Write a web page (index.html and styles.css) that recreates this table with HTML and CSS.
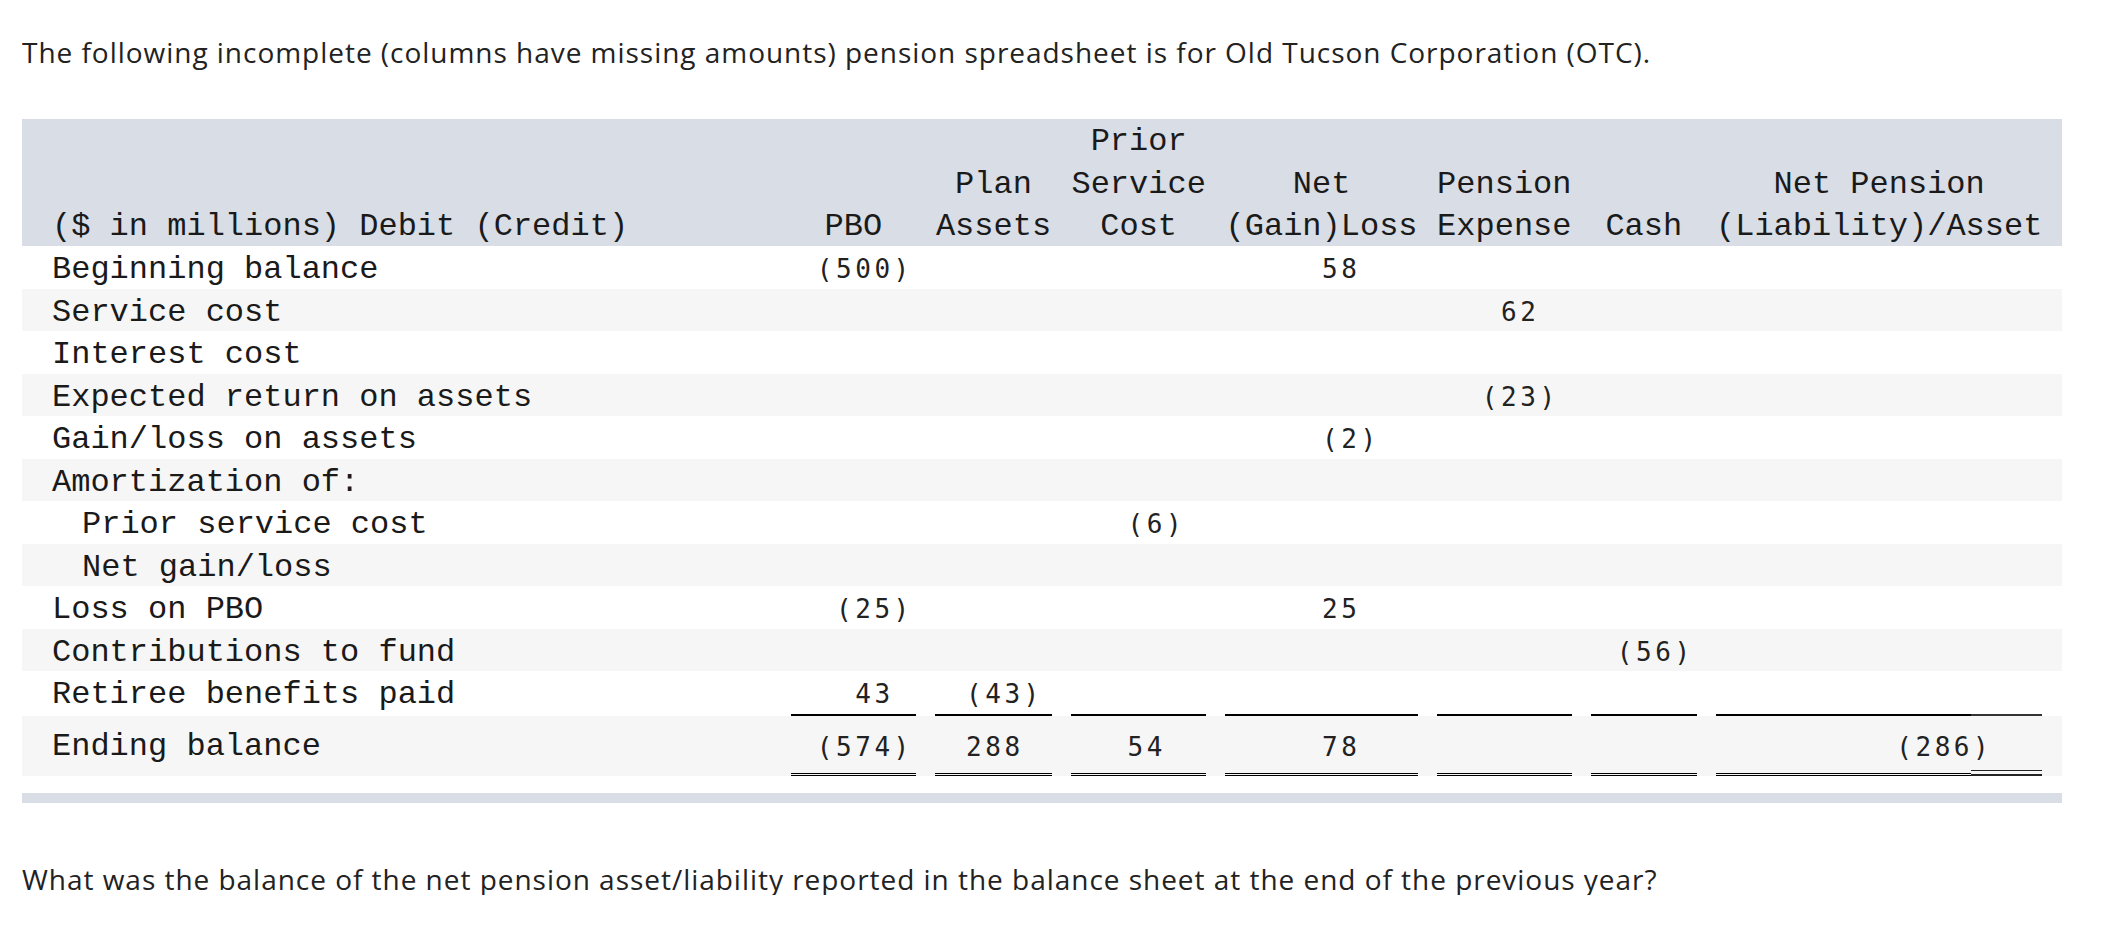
FILE: index.html
```html
<!DOCTYPE html>
<html lang="en">
<head>
<meta charset="utf-8">
<title>Pension spreadsheet</title>
<link rel="stylesheet" href="styles.css">
</head>
<body>
<div class="page">
  <p class="lead">The following incomplete (columns have missing amounts) pension spreadsheet is for Old Tucson Corporation (OTC).</p>
  <table class="sheet">
    <colgroup>
      <col class="w-label"><col class="w-pbo"><col class="w-plan"><col class="w-psc"><col class="w-net"><col class="w-pen"><col class="w-cash"><col class="w-np">
    </colgroup>
    <thead>
      <tr class="head">
        <th class="lbl"><div class="hcell">($ in millions) Debit (Credit)</div></th>
        <th class="hd"><div class="hcell">PBO</div></th>
        <th class="hd"><div class="hcell">Plan<br>Assets</div></th>
        <th class="hd"><div class="hcell">Prior<br>Service<br>Cost</div></th>
        <th class="hd"><div class="hcell">Net<br>(Gain)Loss</div></th>
        <th class="hd"><div class="hcell">Pension<br>Expense</div></th>
        <th class="hd"><div class="hcell">Cash</div></th>
        <th class="hd hd-last"><div class="hcell">Net Pension<br>(Liability)/Asset</div></th>
      </tr>
    </thead>
    <tbody>
      <tr>
        <td class="lbl">Beginning balance</td>
        <td class="num c-pbo">(500)</td><td class="num c-plan"></td><td class="num c-psc"></td><td class="num c-net">58&nbsp;</td><td class="num c-pen"></td><td class="num c-cash"></td><td class="num c-np"></td>
      </tr>
      <tr class="alt">
        <td class="lbl">Service cost</td>
        <td class="num c-pbo"></td><td class="num c-plan"></td><td class="num c-psc"></td><td class="num c-net"></td><td class="num c-pen">62&nbsp;</td><td class="num c-cash"></td><td class="num c-np"></td>
      </tr>
      <tr>
        <td class="lbl">Interest cost</td>
        <td class="num c-pbo"></td><td class="num c-plan"></td><td class="num c-psc"></td><td class="num c-net"></td><td class="num c-pen"></td><td class="num c-cash"></td><td class="num c-np"></td>
      </tr>
      <tr class="alt">
        <td class="lbl">Expected return on assets</td>
        <td class="num c-pbo"></td><td class="num c-plan"></td><td class="num c-psc"></td><td class="num c-net"></td><td class="num c-pen">(23)</td><td class="num c-cash"></td><td class="num c-np"></td>
      </tr>
      <tr>
        <td class="lbl">Gain/loss on assets</td>
        <td class="num c-pbo"></td><td class="num c-plan"></td><td class="num c-psc"></td><td class="num c-net">(2)</td><td class="num c-pen"></td><td class="num c-cash"></td><td class="num c-np"></td>
      </tr>
      <tr class="alt">
        <td class="lbl">Amortization of:</td>
        <td class="num c-pbo"></td><td class="num c-plan"></td><td class="num c-psc"></td><td class="num c-net"></td><td class="num c-pen"></td><td class="num c-cash"></td><td class="num c-np"></td>
      </tr>
      <tr>
        <td class="lbl ind">Prior service cost</td>
        <td class="num c-pbo"></td><td class="num c-plan"></td><td class="num c-psc">(6)</td><td class="num c-net"></td><td class="num c-pen"></td><td class="num c-cash"></td><td class="num c-np"></td>
      </tr>
      <tr class="alt">
        <td class="lbl ind">Net gain/loss</td>
        <td class="num c-pbo"></td><td class="num c-plan"></td><td class="num c-psc"></td><td class="num c-net"></td><td class="num c-pen"></td><td class="num c-cash"></td><td class="num c-np"></td>
      </tr>
      <tr>
        <td class="lbl">Loss on PBO</td>
        <td class="num c-pbo">(25)</td><td class="num c-plan"></td><td class="num c-psc"></td><td class="num c-net">25&nbsp;</td><td class="num c-pen"></td><td class="num c-cash"></td><td class="num c-np"></td>
      </tr>
      <tr class="alt">
        <td class="lbl">Contributions to fund</td>
        <td class="num c-pbo"></td><td class="num c-plan"></td><td class="num c-psc"></td><td class="num c-net"></td><td class="num c-pen"></td><td class="num c-cash">(56)</td><td class="num c-np"></td>
      </tr>
      <tr class="sub">
        <td class="lbl">Retiree benefits paid</td>
        <td class="num c-pbo"><div class="ul">43&nbsp;</div></td>
        <td class="num c-plan"><div class="ul">(43)</div></td>
        <td class="num c-psc"><div class="ul">&nbsp;</div></td>
        <td class="num c-net"><div class="ul">&nbsp;</div></td>
        <td class="num c-pen"><div class="ul">&nbsp;</div></td>
        <td class="num c-cash"><div class="ul">&nbsp;</div></td>
        <td class="num c-np"><div class="ul">&nbsp;</div></td>
      </tr>
      <tr class="alt total">
        <td class="lbl">Ending balance</td>
        <td class="num c-pbo"><div class="dul">(574)</div></td>
        <td class="num c-plan"><div class="dul">288&nbsp;</div></td>
        <td class="num c-psc"><div class="dul">54&nbsp;</div></td>
        <td class="num c-net"><div class="dul">78&nbsp;</div></td>
        <td class="num c-pen"><div class="dul">&nbsp;</div></td>
        <td class="num c-cash"><div class="dul">&nbsp;</div></td>
        <td class="num c-np"><div class="dul">(286)</div></td>
      </tr>
    </tbody>
  </table>
  <div class="foot-bar"></div>
  <p class="question">What was the balance of the net pension asset/liability reported in the balance sheet at the end of the previous year?</p>
</div>
</body>
</html>
```

FILE: styles.css
```css
html, body {
  margin: 0;
  padding: 0;
  background: #ffffff;
}

.page {
  width: 2040px;
  padding: 0 40px 0 22px;
  color: #222222;
}

.lead,
.question {
  font-family: "Open Sans", Lato, "Liberation Sans", sans-serif;
  font-size: 28px;
  line-height: 32px;
  letter-spacing: 0.97px;
  margin: 0;
  color: #222222;
  white-space: nowrap;
}

.lead {
  padding-top: 35.5px;
}

.question {
  margin-top: 60px;
}

.sheet {
  margin-top: 51px;
  width: 2040px;
  table-layout: fixed;
  border-collapse: collapse;
  font-family: "Liberation Mono", "Courier New", monospace;
  font-size: 32px;
  line-height: 42.5px;
  color: #1a1a1a;
}

.w-label { width: 759.3px; }
.w-pbo { width: 144.2px; }
.w-plan { width: 136px; }
.w-psc { width: 154.3px; }
.w-net { width: 211.5px; }
.w-pen { width: 154px; }
.w-cash { width: 125px; }
.w-np { width: 356px; }

.sheet th,
.sheet td {
  white-space: nowrap;
}

/* header */
.head {
  background: #d8dde6;
}

.head th {
  padding: 0 9.7px;
  vertical-align: bottom;
  font-weight: normal;
  line-height: 42.5px;
}

.hcell {
  margin-top: 2.5px;
  margin-bottom: -2.5px;
}

.head .lbl {
  text-align: left;
  padding-left: 30px;
}

.hd {
  text-align: center;
}

.head .hd-last {
  padding-right: 20px;
}

/* body */
.sheet td {
  height: 42.5px;
  box-sizing: border-box;
  padding: 5px 9.7px 0;
  line-height: 37.5px;
  vertical-align: baseline;
}

.alt {
  background: #f6f6f6;
}

.sheet td.lbl {
  padding-left: 30px;
}

.sheet td.ind {
  padding-left: 60px;
}

.c-pbo { --off: 3px; }
.c-plan { --off: 9px; }
.c-psc { --off: 21px; }
.c-net { --off: 38px; }
.c-pen { --off: 13px; }
.c-cash { --off: 3px; }
.c-np { --off: 50px; }

.sheet td.num {
  text-align: right;
  font-family: "DejaVu Sans Mono", monospace;
  font-size: 26px;
  line-height: 30px;
  letter-spacing: 3.55px;
  color: #222222;
  padding-right: calc(9.7px + var(--off));
}

.sheet td.c-np {
  padding-right: calc(20px + var(--off));
}

.ul,
.dul {
  position: relative;
  margin-right: calc(-1 * var(--off));
  padding-right: var(--off);
}

/* underlined row */
.sub td {
  height: 44.5px;
}

.sheet .sub td.num {
  vertical-align: bottom;
  padding-top: 0;
}

.ul {
  line-height: 38.4px;
  border-bottom: 2px solid #000000;
}

/* total row */
.sheet .total td {
  height: 60px;
  padding-top: 12.7px;
}

.sheet .total td.num {
  vertical-align: bottom;
  padding-top: 0;
}

.dul {
  line-height: 30px;
  padding-bottom: 11px;
  border-bottom: 3px double #000000;
}

.c-np .ul::after {
  content: "";
  position: absolute;
  right: 0;
  bottom: -2px;
  width: 71px;
  height: 2px;
  background: #333333;
}

.c-np .dul::after {
  content: "";
  position: absolute;
  right: 0;
  bottom: -3px;
  width: 71px;
  height: 6px;
  box-sizing: border-box;
  border-top: 1.5px solid #222222;
  border-bottom: 2px solid #222222;
  background: #f6f6f6;
}

.foot-bar {
  margin-top: 17px;
  height: 10px;
  background: #d8dde6;
}
```
